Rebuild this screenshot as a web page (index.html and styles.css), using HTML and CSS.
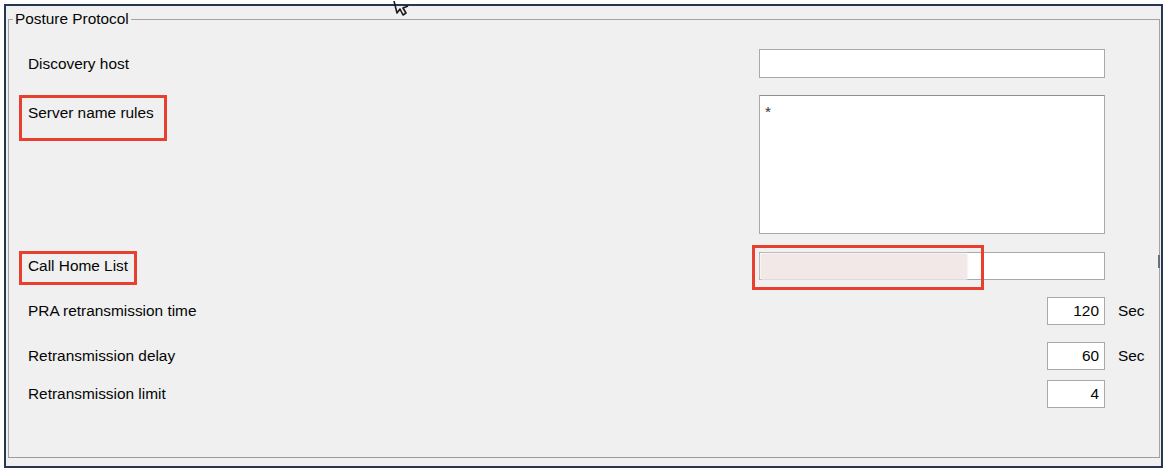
FILE: index.html
```html
<!DOCTYPE html>
<html lang="en">
<head>
<meta charset="utf-8">
<title>Posture Protocol</title>
<link rel="stylesheet" href="styles.css">
</head>
<body>
<div class="window">
  <fieldset class="group">
    <legend class="group-title">Posture Protocol</legend>
    <div class="rows">
      <div class="row r-discovery">
        <span class="label">Discovery host</span>
        <div class="field"></div>
        <span class="unit"></span>
      </div>
      <div class="row r-rules">
        <span class="label hl">Server name rules</span>
        <div class="field area">*</div>
        <span class="unit"></span>
      </div>
      <div class="row r-home">
        <span class="label hl">Call Home List</span>
        <div class="field home">
          <span class="redacted"></span>
          <span class="hl-box"></span>
        </div>
        <span class="unit"></span>
      </div>
      <div class="row r-pra">
        <span class="label">PRA retransmission time</span>
        <div class="field num">120</div>
        <span class="unit">Sec</span>
      </div>
      <div class="row r-delay">
        <span class="label">Retransmission delay</span>
        <div class="field num">60</div>
        <span class="unit">Sec</span>
      </div>
      <div class="row r-limit">
        <span class="label">Retransmission limit</span>
        <div class="field num">4</div>
        <span class="unit"></span>
      </div>
    </div>
  </fieldset>
  <svg class="cursor" width="20" height="18" viewBox="0 0 20 18">
    <polyline points="3,0 6,12 9,8 12,14 15,12 12,7 17,5" fill="none" stroke="#1b1b1b" stroke-width="1.6" stroke-linejoin="round"/>
  </svg>
  <span class="edge-mark"></span>
</div>
</body>
</html>
```

FILE: styles.css
```css
html, body {
  margin: 0;
  padding: 0;
  background: #ffffff;
}

body {
  font-family: "Liberation Sans", Arial, sans-serif;
  font-size: 15.4px;
  color: #050505;
}

.window {
  position: relative;
  margin: 4px 0 0 4px;
  width: 1159px;
  height: 464px;
  box-sizing: border-box;
  border: 2px solid #27374f;
  background: #f0f0f0;
  display: flex;
  flex-direction: column;
}

.group {
  flex: 1;
  min-width: 0;
  margin: 4px 1px 8px 2px;
  padding: 0;
  border: 1px solid #a3a3a3;
  border-bottom-color: #9c9c9c;
}

.group-title {
  margin-left: 4px;
  padding: 0 2px;
  line-height: 18px;
}

.rows {
  padding: 21px 0 0 10px;
}

.row {
  display: grid;
  grid-template-columns: 1fr 346px 54px;
  align-items: center;
}

.label {
  justify-self: start;
  border: 3px solid transparent;
  padding: 0 8px 0 6px;
  line-height: 18px;
}

.label.hl {
  border-color: #e8402f;
}

.r-rules .label.hl {
  padding-right: 10px;
}

.field {
  position: relative;
  box-sizing: border-box;
  height: 28px;
  border: 1px solid #a9a9a9;
  background: #ffffff;
}

.unit {
  padding-left: 13px;
  line-height: 18px;
}

.r-discovery .field {
  height: 29px;
}

.r-rules {
  margin-top: 17px;
  align-items: start;
}

.r-rules .label {
  padding-top: 6px;
  padding-bottom: 16px;
}

.field.area {
  height: 139px;
  padding: 7px 5px;
  line-height: 18px;
  color: #333;
  border-top-color: #8e8e8e;
}

.r-home {
  margin-top: 17px;
  align-items: start;
}

.r-home .label {
  padding: 3px 6px 7px 6px;
}

.field.home {
  margin-top: 1px;
  display: flex;
  align-items: flex-end;
  padding-left: 1px;
}

.redacted {
  width: 206px;
  height: 25px;
  background: #f3e8e8;
  border-radius: 2px;
  box-shadow: 0 0 2px 1px #f6eeee;
}

.hl-box {
  position: absolute;
  left: -8px;
  top: -8px;
  width: 232px;
  height: 45px;
  box-sizing: border-box;
  border: 3px solid #e8402f;
}

.r-pra {
  margin-top: 12px;
}

.r-delay {
  margin-top: 17px;
}

.r-limit {
  margin-top: 10px;
}

.field.num {
  justify-self: end;
  width: 58px;
  padding-right: 5px;
  text-align: right;
  line-height: 26px;
}

.cursor {
  position: absolute;
  left: 385px;
  top: -5px;
}

.edge-mark {
  position: absolute;
  left: 1152px;
  top: 249px;
  width: 2px;
  height: 13px;
  background: #6a6f76;
}
```
